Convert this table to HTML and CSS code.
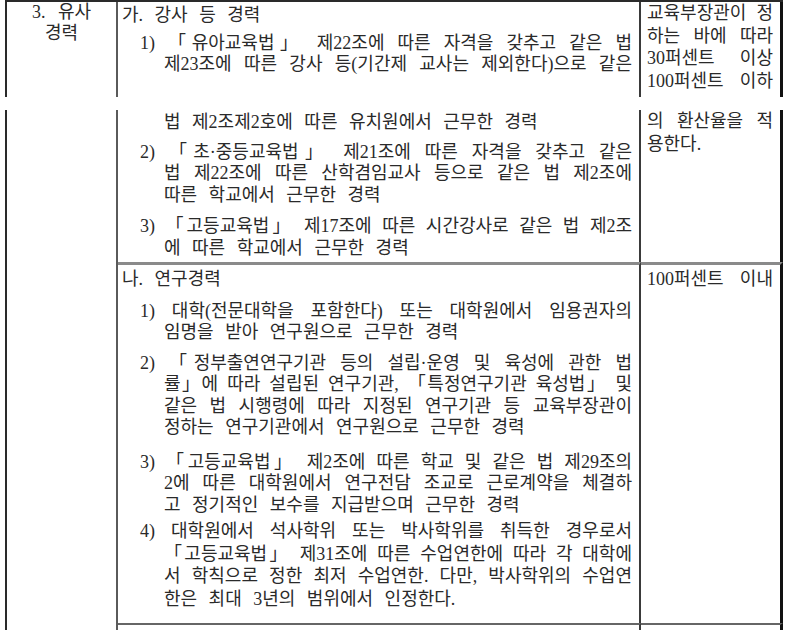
FILE: index.html
```html
<!DOCTYPE html>
<html lang="ko">
<head>
<meta charset="utf-8">
<title>유사 경력</title>
<link rel="stylesheet" href="styles.css">
</head>
<body>
<div class="frag top">
  <div class="c1">
    <div class="h1l">3. 유사</div>
    <div class="h1l">경력</div>
  </div>
  <div class="c2 pt3">
    <div class="hd">가. 강사 등 경력</div>
    <div class="it g6">
      <div class="l j n">1) <span class="ob">「</span>유아교육법<span class="cb">」</span> 제22조에 따른 자격을 갖추고 같은 법</div>
      <div class="l j">제23조에 따른 강사 등(기간제 교사는 제외한다)으로 같은</div>
    </div>
  </div>
  <div class="c3 lh225">
    <div class="l j">교육부장관이 정</div>
    <div class="l j">하는 바에 따라</div>
    <div class="l j">30퍼센트 이상</div>
    <div class="l j">100퍼센트 이하</div>
  </div>
</div>

<div class="frag bottom">
  <div class="c1 span"></div>

  <div class="c2 pt2">
    <div class="it">
      <div class="l">법 제2조제2호에 따른 유치원에서 근무한 경력</div>
    </div>
    <div class="it g8">
      <div class="l j n">2) <span class="ob">「</span>초·중등교육법<span class="cb">」</span> 제21조에 따른 자격을 갖추고 같은</div>
      <div class="l j">법 제22조에 따른 산학겸임교사 등으로 같은 법 제2조에</div>
      <div class="l">따른 학교에서 근무한 경력</div>
    </div>
    <div class="it g10">
      <div class="l j n">3) <span class="ob">「</span>고등교육법<span class="cb">」</span> 제17조에 따른 시간강사로 같은 법 제2조</div>
      <div class="l">에 따른 학교에서 근무한 경력</div>
    </div>
  </div>
  <div class="c3 lh23">
    <div class="l j">의 환산율을 적</div>
    <div class="l">용한다.</div>
  </div>

  <div class="c2 sep pt4">
    <div class="hd">나. 연구경력</div>
    <div class="it g10">
      <div class="l j n">1) 대학(전문대학을 포함한다) 또는 대학원에서 임용권자의</div>
      <div class="l">임명을 받아 연구원으로 근무한 경력</div>
    </div>
    <div class="it g9">
      <div class="l j n">2) <span class="ob">「</span>정부출연연구기관 등의 설립·운영 및 육성에 관한 법</div>
      <div class="l j">률<span class="cb">」</span>에 따라 설립된 연구기관, <span class="ob">「</span>특정연구기관 육성법<span class="cb">」</span> 및</div>
      <div class="l j">같은 법 시행령에 따라 지정된 연구기관 등 교육부장관이</div>
      <div class="l">정하는 연구기관에서 연구원으로 근무한 경력</div>
    </div>
    <div class="it g13">
      <div class="l j n">3) <span class="ob">「</span>고등교육법<span class="cb">」</span> 제2조에 따른 학교 및 같은 법 제29조의</div>
      <div class="l j">2에 따른 대학원에서 연구전담 조교로 근로계약을 체결하</div>
      <div class="l">고 정기적인 보수를 지급받으며 근무한 경력</div>
    </div>
    <div class="it g4 wide">
      <div class="l j n">4) 대학원에서 석사학위 또는 박사학위를 취득한 경우로서</div>
      <div class="l j"><span class="ob">「</span>고등교육법<span class="cb">」</span> 제31조에 따른 수업연한에 따라 각 대학에</div>
      <div class="l j">서 학칙으로 정한 최저 수업연한. 다만, 박사학위의 수업연</div>
      <div class="l">한은 최대 3년의 범위에서 인정한다.</div>
    </div>
  </div>
  <div class="c3 sep lh23 pt3">
    <div class="l j">100퍼센트 이내</div>
  </div>

  <div class="c2 sep2"></div>
  <div class="c3 sep2"></div>
</div>
</body>
</html>
```

FILE: styles.css
```css
html, body {
  margin: 0;
  padding: 0;
  background: #ffffff;
}

body {
  overflow: hidden;
  color: #2a2a2a;
  font-family: "Liberation Serif", "Noto Sans CJK KR", serif;
  font-size: 18px;
  word-spacing: 7px;
}

.frag {
  display: grid;
  grid-template-columns: 113px 523px 142px;
  width: 778px;
  margin-left: 5px;
  box-sizing: border-box;
}

.frag.top {
  height: 97px;
  border-top: 2px solid #2a2a2a;
}

.frag.bottom {
  margin-top: 13px;
  height: 530px;
  grid-template-rows: 152px 361px 1fr;
}

.c1 {
  border-left: 2px solid #2a2a2a;
  border-right: 2px solid #5a5a5a;
  text-align: center;
  line-height: 21px;
}

.c1.span {
  grid-row: 1 / 4;
}

.h1l {
  word-spacing: 8px;
}

.c2 {
  border-right: 2px solid #3a3a3a;
  padding: 0 7px 0 4px;
  line-height: 21.5px;
}

.c3 {
  border-right: 3px solid #111111;
  padding: 0 7px 0 6px;
  word-spacing: 2px;
}

.sep {
  border-top: 3px solid #8a8a8a;
}

.sep2 {
  border-top: 2px solid #666666;
}

.pt2 { padding-top: 2px; }
.pt3 { padding-top: 3px; }
.pt4 { padding-top: 4px; }

.lh225 { line-height: 22.5px; }
.lh23 { line-height: 23px; }

.hd {
  white-space: nowrap;
}

.it {
  padding-left: 42px;
}

.it.wide {
  line-height: 22.6px;
}

.g4 { margin-top: 4px; }
.g6 { margin-top: 6px; }
.g8 { margin-top: 8px; }
.g9 { margin-top: 9px; }
.g10 { margin-top: 10px; }
.g13 { margin-top: 13px; }

.l {
  text-align: left;
  word-break: keep-all;
}

.l.j {
  text-align: justify;
  text-align-last: justify;
  word-spacing: 3px;
}

.c3 .l.j {
  word-spacing: 1px;
}

.l.n {
  margin-left: -24px;
}
```
